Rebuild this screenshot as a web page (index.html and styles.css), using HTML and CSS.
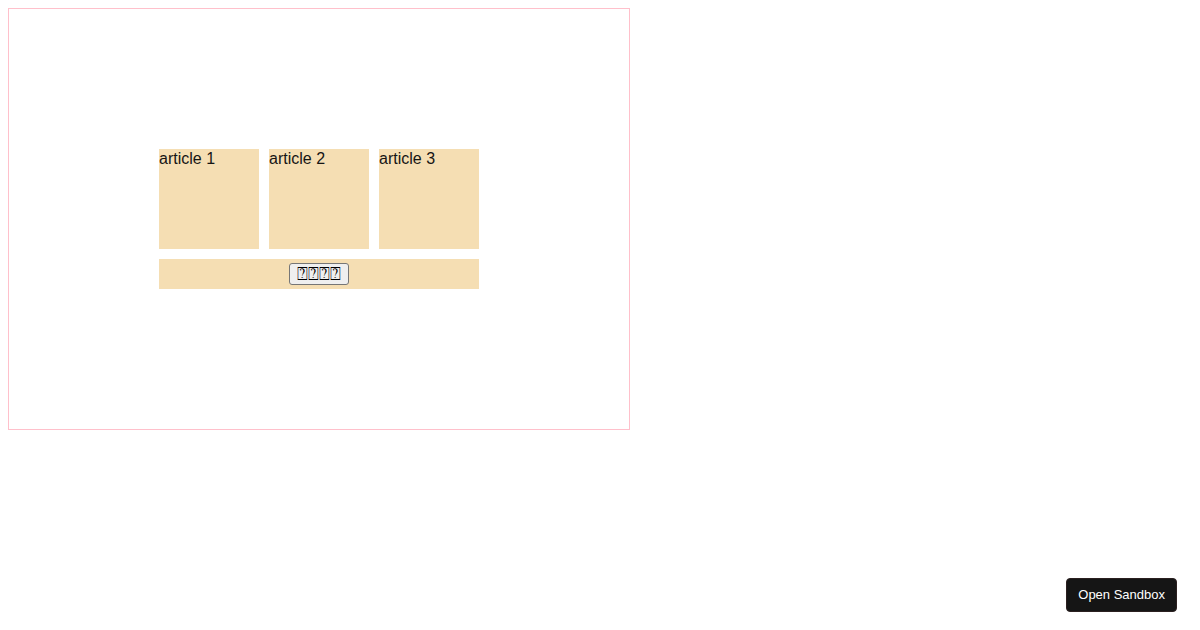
FILE: index.html
```html
<!DOCTYPE html>
<html lang="en">
<head>
<meta charset="utf-8">
<meta name="viewport" content="width=device-width, initial-scale=1">
<title>Articles</title>
<link rel="stylesheet" href="styles.css">
</head>
<body>
<main class="board">
  <article class="card">article 1</article>
  <article class="card">article 2</article>
  <article class="card">article 3</article>
  <div class="actions"><button class="more" type="button">⍰⍰⍰⍰</button></div>
</main>
<a class="sandbox-link" href="#">Open Sandbox</a>
</body>
</html>
```

FILE: styles.css
```css
body {
  margin: 8px;
  background: white;
  color: #151515;
  font: 16px/20px "Liberation Sans", Arial, sans-serif;
}

.board {
  display: grid;
  grid-template-columns: repeat(3, minmax(0, 100px));
  grid-template-rows: 100px auto;
  gap: 10px;
  place-content: center;
  max-width: 600px;
  min-height: 400px;
  padding: 10px;
  border: 1px solid pink;
}

.card,
.actions {
  background: wheat;
}

.actions {
  grid-column: 1 / -1;
  display: flex;
  justify-content: center;
  padding: 4px;
}

.more {
  padding: 0 7px;
  border: 1px solid #767676;
  border-radius: 3px;
  background: #efefef;
  color: black;
  font: 18px/20px "Liberation Sans", Arial;
}

.sandbox-link {
  position: fixed;
  right: 23px;
  bottom: 18px;
  padding: 8px 11px;
  border: 1px solid #2b2020;
  border-radius: 4px;
  background: #151515;
  color: white;
  font-size: 13px;
  line-height: 16px;
  text-decoration: none;
}
```
